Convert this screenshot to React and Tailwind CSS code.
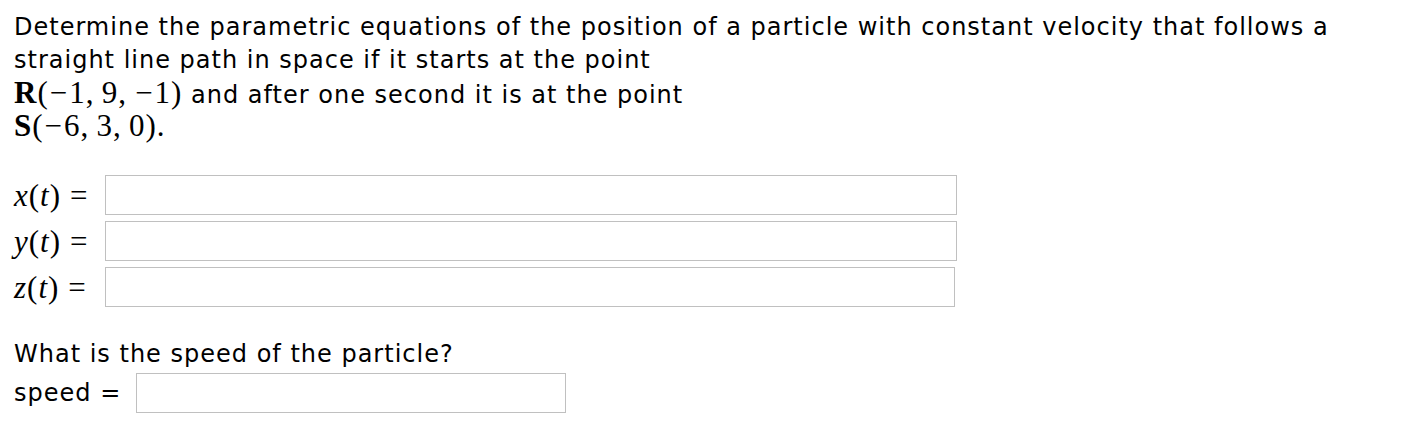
export default function App() {
  const sans = { fontFamily: '"DejaVu Sans", Verdana, sans-serif' };
  const mathCls = "font-['Liberation_Serif',serif] text-[31px] leading-none tracking-[1px]";
  return (
    <div className="w-[1420px] h-[448px] bg-white text-black" style={sans}>
      <div className="pl-[14px] pt-[11px]">
        <div className="text-[24px] leading-[33px] tracking-[1px]">
          <div className="h-[33px]">Determine the parametric equations of the position of a particle with constant velocity that follows a</div>
          <div className="h-[33px]">straight line path in space if it starts at the point</div>
          <div className="h-[33px]">
            <span className={mathCls}><b>R</b>(<span className="mx-[1px]">−</span>1,&thinsp;9,&thinsp;<span className="mx-[1px]">−</span>1)</span> and after one second it is at the point
          </div>
          <div className="h-[33px]">
            <span className={mathCls}><b>S</b>(<span className="mx-[1px]">−</span>6,&thinsp;3,&thinsp;0).</span>
          </div>
        </div>
        <div className="mt-[32px] flex flex-col gap-[6px]">
          {[
            ['x', 'w-[852px]'],
            ['y', 'w-[852px]'],
            ['z', 'w-[850px]'],
          ].map(([v, w]) => (
            <div key={v} className="flex items-center">
              <div className={`w-[91px] ${mathCls}`}>
                <i>{v}</i>(<i>t</i>)<span className="ml-[9px]">=</span>
              </div>
              <div className={`${w} h-[40px] border border-[#c0c0c0] bg-white`} />
            </div>
          ))}
        </div>
        <div className="mt-[31px] text-[24px] leading-[33px] tracking-[1px]">What is the speed of the particle?</div>
        <div className="mt-[2px] flex items-center">
          <div className="w-[122px] text-[24px] tracking-[1px]">speed =</div>
          <div className="w-[430px] h-[40px] border border-[#c0c0c0] bg-white" />
        </div>
      </div>
    </div>
  );
}
